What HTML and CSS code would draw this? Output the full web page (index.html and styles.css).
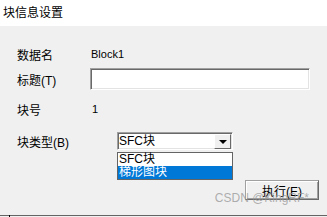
FILE: index.html
```html
<!DOCTYPE html>
<html>
<head>
    <meta charset="UTF-8">
    <title>块信息设置</title>
    <link rel="stylesheet" href="styles.css">
</head>
<body>
    <div class="titlebar">块信息设置</div>
    <div class="form">
        <div class="row row-name">
            <span class="label">数据名</span>
            <span class="value">Block1</span>
        </div>
        <div class="row row-title">
            <label class="label" for="title">标题(T)</label>
            <input class="text-input" id="title" type="text">
        </div>
        <div class="row row-num">
            <span class="label">块号</span>
            <span class="value">1</span>
        </div>
        <div class="row row-type">
            <span class="label label-wide">块类型(B)</span>
            <div class="combo">
                <div class="combo-box">
                    <span class="combo-text">SFC块</span>
                    <span class="combo-btn"><span class="arrow"></span></span>
                </div>
                <ul class="combo-list">
                    <li>SFC块</li>
                    <li class="selected">梯形图块</li>
                </ul>
            </div>
        </div>
        <div class="actions">
            <button class="btn">执行(E)</button>
            <span class="watermark">CSDN @KingRF*</span>
        </div>
    </div>
    <div class="statusline"><span class="tick"></span></div>
</body>
</html>
```

FILE: styles.css
```css
body {
    margin: 0;
    width: 327px;
    height: 217px;
    overflow: hidden;
    background-color: #f0f0f0;
    font-family: "Liberation Sans", "Noto Sans CJK SC", sans-serif;
    font-size: 12px;
    color: #000;
}
.titlebar {
    height: 26px;
    line-height: 27px;
    padding-left: 3px;
    background-color: #fff;
}
.form {
    position: relative;
    padding: 16px 8px 0 17px;
}
.row {
    display: flex;
    align-items: center;
}
.row-name { height: 24px; }
.row-title { height: 26px; }
.row-num { height: 34px; }
.row-type {
    height: 20px;
    margin-top: 5px;
}
.label {
    width: 73px;
    flex: none;
}
.label-wide {
    width: 100px;
}
.value {
    font-size: 11px;
    padding-left: 1px;
}
.row-num .value {
    padding-left: 2px;
}
.text-input {
    box-sizing: border-box;
    width: 220px;
    height: 22px;
    margin: 0;
    padding: 0 3px;
    border-style: solid;
    border-width: 1px;
    border-color: #a0a0a0 #fff #fff #a0a0a0;
    box-shadow: inset 1px 1px #696969, inset -1px -1px #e3e3e3;
    background-color: #fff;
    outline: none;
}
.combo {
    position: relative;
    width: 116px;
    height: 18px;
}
.combo-box {
    box-sizing: border-box;
    display: flex;
    align-items: center;
    height: 18px;
    border-style: solid;
    border-width: 1px;
    border-color: #a0a0a0 #fff #fff #a0a0a0;
    box-shadow: inset 1px 1px #696969, inset -1px -1px #e3e3e3;
    background-color: #fff;
}
.combo-text {
    flex: 1;
    padding-left: 1px;
    line-height: 16px;
}
.combo-btn {
    box-sizing: border-box;
    display: flex;
    align-items: center;
    justify-content: center;
    width: 17px;
    height: 15px;
    margin-right: 1px;
    background-color: #f0f0f0;
    border-style: solid;
    border-width: 1px;
    border-color: #fff #696969 #696969 #fff;
}
.arrow {
    width: 0;
    height: 0;
    border-left: 4px solid transparent;
    border-right: 4px solid transparent;
    border-top: 4px solid #000;
    margin-top: 1px;
}
.combo-list {
    position: absolute;
    top: 20px;
    left: 0;
    width: 116px;
    box-sizing: border-box;
    margin: 0;
    padding: 0;
    list-style: none;
    border: 1px solid #646464;
    background-color: #fff;
}
.combo-list li {
    height: 13px;
    line-height: 13px;
    padding-left: 1px;
}
.combo-list .selected {
    background-color: #0078d7;
    color: #fff;
}
.actions {
    position: relative;
    display: flex;
    justify-content: flex-end;
    margin-top: 29px;
}
.btn {
    box-sizing: border-box;
    width: 74px;
    height: 20px;
    margin: 0;
    padding: 0;
    font-family: inherit;
    font-size: 12px;
    background-color: #f0f0f0;
    border-style: solid;
    border-width: 1px;
    border-color: #a0a0a0 #696969 #696969 #a0a0a0;
    box-shadow: inset 1px 1px #fff, inset -1px -1px #a0a0a0;
}
.watermark {
    position: absolute;
    right: 10px;
    top: 12px;
    font-size: 12px;
    line-height: 12px;
    color: rgba(150, 150, 150, 0.75);
    pointer-events: none;
}
.statusline {
    position: relative;
    margin-top: 15px;
    border-top: 1px solid #646464;
    height: 1px;
}
.tick {
    position: absolute;
    left: 9px;
    top: -1px;
    width: 1px;
    height: 2px;
    background-color: #000;
}
```
